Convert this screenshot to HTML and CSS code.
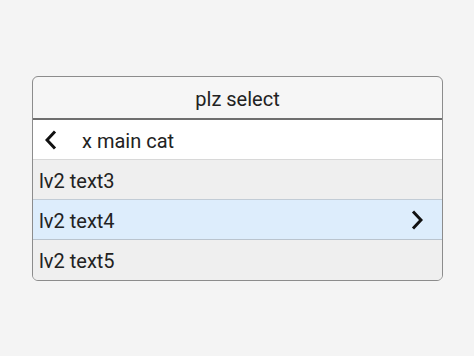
FILE: index.html
```html
<!DOCTYPE html>
<html>
<head>
<meta charset="utf-8">
<link rel="stylesheet" href="styles.css">
</head>
<body>
<div class="picker">
  <div class="picker-head">plz select</div>
  <div class="row row-nav">
    <svg class="chev chev-left" width="12" height="20" viewBox="0 0 12 20"><polyline points="10,1.5 2,10 10,18.5" fill="none" stroke="#111" stroke-width="3"/></svg>
    <span class="nav-label">x main cat</span>
  </div>
  <div class="row row-item">lv2 text3</div>
  <div class="row row-item row-active">
    <span>lv2 text4</span>
    <svg class="chev chev-right" width="12" height="20" viewBox="0 0 12 20"><polyline points="2,1.5 10,10 2,18.5" fill="none" stroke="#111" stroke-width="3"/></svg>
  </div>
  <div class="row row-item row-last">lv2 text5</div>
</div>
</body>
</html>
```

FILE: styles.css
```css
html, body {
  margin: 0;
  padding: 0;
  background: #f4f4f4;
}
body {
  font-family: Roboto, "Noto Sans", sans-serif;
  color: #222;
  padding: 76px 0 0 32px;
}
.picker {
  box-sizing: border-box;
  width: 411px;
  border: 1px solid #8c8c8c;
  border-radius: 6px;
  overflow: hidden;
  background: #f6f6f6;
}
.picker-head {
  box-sizing: border-box;
  height: 43px;
  border-bottom: 2px solid #6e6e6e;
  display: flex;
  align-items: center;
  justify-content: center;
  font-size: 20px;
  padding-top: 3px;
}
.row {
  box-sizing: border-box;
  height: 40px;
  display: flex;
  align-items: center;
  padding: 2px 19px 0 6px;
  font-size: 20px;
  border-bottom: 1px solid #d4d4d4;
  background: #efefef;
}
.row-nav {
  background: #fff;
  border-bottom-color: #d8d8d8;
}
.chev-left {
  margin-left: 6px;
  margin-right: 25px;
  margin-top: -2px;
}
.row-active {
  background: #ddedfc;
  justify-content: space-between;
  border-top: 1px solid #c2ccd6;
  border-bottom: 1px solid #bac4ce;
  margin-top: -1px;
  height: 41px;
}
.chev-right {
  margin-top: -2px;
}
.row-last {
  border-bottom: none;
}
```
